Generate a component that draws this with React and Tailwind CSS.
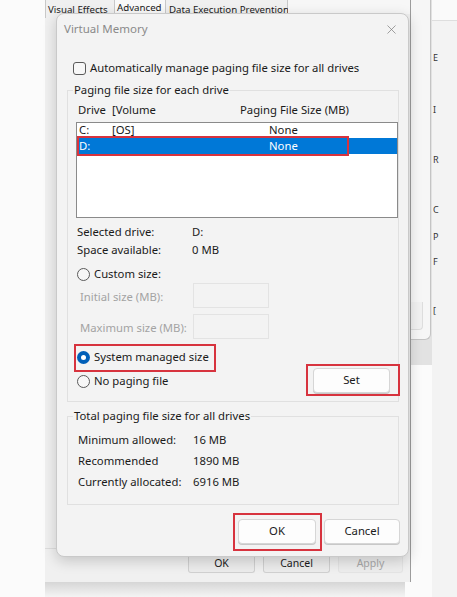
import { X } from 'lucide-react';

const font = { fontFamily: '"Noto Sans", "Segoe UI", sans-serif' };

function Radio({ checked }) {
  if (checked) {
    return (
      <span className="flex h-[13px] w-[13px] items-center justify-center rounded-full bg-[#005fb8]">
        <span className="h-[5px] w-[5px] rounded-full bg-white" />
      </span>
    );
  }
  return <span className="h-[13px] w-[13px] rounded-full border border-[#5a5a5a] bg-[#f7f7f7]" />;
}

function GroupBox({ label, className, children }) {
  return (
    <fieldset className={`border border-[#e0e0e0] ${className}`}>
      <legend className="ml-[5px] px-px text-[11.3px] leading-[16px] text-[#1a1a1a]">{label}</legend>
      {children}
    </fieldset>
  );
}

function WinButton({ children, className }) {
  return (
    <button className={`flex h-[25px] items-center justify-center rounded-[4px] border border-[#d6d6d6] bg-[#fdfdfd] text-[11.3px] text-[#1a1a1a] shadow-[0_1px_0_#c8c8c8] ${className}`}>
      {children}
    </button>
  );
}

function Annot({ className }) {
  return <span className={`pointer-events-none absolute border-2 border-[#d7333e] ${className}`} />;
}

function Background() {
  return (
    <>
      {/* parent window: Performance Options */}
      <div className="absolute left-[45px] top-0 h-[582px] w-[366px] border-r border-[#9c9c9c] bg-[#f0f0f0]">
        <div className="flex h-[18px] items-start whitespace-nowrap text-[9.7px] leading-[13px] text-[#1a1a1a]">
          <div className="h-[18px] w-[69px] border-l border-[#c8c8c8] pl-[2px] pt-[3px]">Visual Effects</div>
          <div className="h-[18px] w-[52px] border-x border-[#c8c8c8] bg-[#f9f9f9] pl-[2px] pt-px">Advanced</div>
          <div className="h-[18px] w-[122px] border-r border-[#c8c8c8] pl-[3px] pt-[3px]">Data Execution Prevention</div>
          <div className="h-[14px] flex-1 bg-[#f7f7f7]" />
        </div>
        <div className="absolute left-0 top-[548px] h-px w-[12px] bg-[#dddddd]" />
        <div className="absolute left-[143px] top-[555px] flex gap-[8px] text-[10.5px]">
          <div className="flex h-[18px] w-[67px] items-center justify-center rounded-b-[3px] border border-t-0 border-[#d0d0d0] bg-[#ececec] text-[#1a1a1a]">OK</div>
          <div className="flex h-[18px] w-[67px] items-center justify-center rounded-b-[3px] border border-t-0 border-[#d0d0d0] bg-[#ececec] text-[#1a1a1a]">Cancel</div>
          <div className="flex h-[18px] w-[65px] items-center justify-center rounded-b-[3px] border border-t-0 border-[#e4e4e4] bg-[#ededed] text-[#a8a8a8]">Apply</div>
        </div>
      </div>

      {/* window behind on the right */}
      <div className="absolute left-[411px] top-0 h-[365px] w-[22px] bg-[#e2e2e2]" />
      <div className="absolute left-[411px] top-0 h-[340px] w-[20px] rounded-br-[6px] border-r border-b border-[#c4c4c4] bg-[#f6f6f6]">
        <div className="absolute left-0 top-[302px] h-[28px] w-[12px] rounded-br-[4px] border-r border-b border-[#dddddd] bg-[#f1f1f1]" />
      </div>
      <div className="absolute left-[432px] top-0 h-[21px] w-[25px] border-b border-[#dedede] bg-[#fafafa]" />
      <div className="absolute left-[432px] top-[21px] h-[576px] w-[25px] bg-[#f3f3f3] text-[9px] leading-[12px] text-[#333]">
        <span className="absolute left-[1px] top-[31px]">E</span>
        <span className="absolute left-[1px] top-[83px]">I</span>
        <span className="absolute left-[1px] top-[133px]">R</span>
        <span className="absolute left-[1px] top-[183px]">C</span>
        <span className="absolute left-[1px] top-[210px]">P</span>
        <span className="absolute left-[1px] top-[235px]">F</span>
        <span className="absolute left-[1px] top-[284px]">[</span>
      </div>
      <div className="absolute left-[45px] top-[582px] h-[15px] w-[360px] bg-gradient-to-b from-[#d6d6d6] to-[#f4f4f4]" />
    </>
  );
}

export default function App() {
  return (
    <div className="relative h-[597px] w-[457px] overflow-hidden bg-[#fbfbfb]" style={font}>
      <Background />

      <div className="absolute left-[56px] top-[13px] flex h-[544px] w-[353px] flex-col rounded-[8px] border border-[#c9c9c9] bg-[#f3f3f3] shadow-[0_4px_14px_rgba(0,0,0,0.18)]">
        {/* title bar */}
        <div className="flex h-[30px] items-center justify-between pl-[7px] pr-[9px]">
          <span className="text-[11.5px] text-[#8a8a8a]">Virtual Memory</span>
          <X className="h-[15px] w-[15px] text-[#777]" strokeWidth={1.1} />
        </div>

        {/* auto manage */}
        <label className="mt-[17px] flex h-[14px] items-center gap-[4px] pl-[16px] text-[11.3px] text-[#1a1a1a]">
          <span className="h-[13px] w-[13px] rounded-[3px] border border-[#5a5a5a] bg-[#f7f7f7]" />
          Automatically manage paging file size for all drives
        </label>

        <GroupBox label="Paging file size for each drive" className="ml-[10px] mt-[7px] h-[320px] w-[332px]">
          <div className="mt-[4px] flex h-[16px] items-center text-[11.3px] text-[#1a1a1a]">
            <span className="w-[44px] pl-[10px]">Drive</span>
            <span className="w-[128px]">[Volume</span>
            <span>Paging File Size (MB)</span>
          </div>

          <div className="relative ml-[8px] mt-[4px] h-[96px] w-[322px] border border-[#8a8a8a] bg-white text-[11.3px]">
            <div className="flex h-[15px] items-center text-[#1a1a1a]">
              <span className="w-[35px] pl-[2px]">C:</span>
              <span className="w-[157px]">[OS]</span>
              <span>None</span>
            </div>
            <div className="flex h-[16px] items-center bg-[#0078d7] text-white">
              <span className="w-[192px] pl-[2px]">D:</span>
              <span>None</span>
            </div>
            <Annot className="left-0 top-[13px] h-[20px] w-[272px]" />
          </div>

          <div className="mt-[5px] pl-[9px] text-[11.3px] text-[#1a1a1a]">
            <div className="flex h-[18px] items-center">
              <span className="w-[115px]">Selected drive:</span>
              <span>D:</span>
            </div>
            <div className="flex h-[18px] items-center">
              <span className="w-[115px]">Space available:</span>
              <span>0 MB</span>
            </div>
          </div>

          <div className="mt-[6px] flex h-[18px] items-center gap-[4px] pl-[9px] text-[11.3px] text-[#1a1a1a]">
            <Radio />
            Custom size:
          </div>
          <div className="flex h-[25px] items-center whitespace-nowrap text-[11.3px] text-[#a3a3a3]">
            <span className="w-[125px] pl-[12px] pt-[3px]">Initial size (MB):</span>
            <span className="h-[25px] w-[76px] border border-[#e3e3e3] bg-[#f3f3f3]" />
          </div>
          <div className="mt-[6px] flex h-[25px] items-center whitespace-nowrap text-[11.3px] text-[#a3a3a3]">
            <span className="w-[125px] pl-[12px] pt-[3px]">Maximum size (MB):</span>
            <span className="h-[25px] w-[76px] border border-[#e3e3e3] bg-[#f3f3f3]" />
          </div>

          <div className="mt-[9px] flex items-start justify-between text-[11.3px] text-[#1a1a1a]">
            <div className="flex flex-col gap-[6px] pl-[9px]">
              <div className="relative flex h-[18px] items-center gap-[4px]">
                <Radio checked />
                System managed size
                <Annot className="left-[-3px] top-[-4px] h-[28px] w-[142px]" />
              </div>
              <div className="flex h-[18px] items-center gap-[4px]">
                <Radio />
                No paging file
              </div>
            </div>
            <div className="relative mr-[8px] mt-[20px]">
              <WinButton className="w-[77px]">Set</WinButton>
              <Annot className="left-[-7px] top-[-4px] h-[32px] w-[94px]" />
            </div>
          </div>
        </GroupBox>

        <GroupBox label="Total paging file size for all drives" className="ml-[10px] mt-[6px] h-[97px] w-[332px]">
          <div className="mt-[6px] pl-[10px] text-[11.3px] text-[#1a1a1a]">
            {[
              ['Minimum allowed:', '16 MB'],
              ['Recommended', '1890 MB'],
              ['Currently allocated:', '6916 MB'],
            ].map(([k, v]) => (
              <div key={k} className="flex h-[21px] items-center">
                <span className="w-[115px]">{k}</span>
                <span>{v}</span>
              </div>
            ))}
          </div>
        </GroupBox>

        <div className="mt-[14px] flex justify-end gap-[8px] pr-[8px]">
          <div className="relative">
            <WinButton className="w-[78px]">OK</WinButton>
            <Annot className="left-[-5px] top-[-6px] h-[38px] w-[89px]" />
          </div>
          <WinButton className="w-[76px]">Cancel</WinButton>
        </div>
      </div>
    </div>
  );
}
